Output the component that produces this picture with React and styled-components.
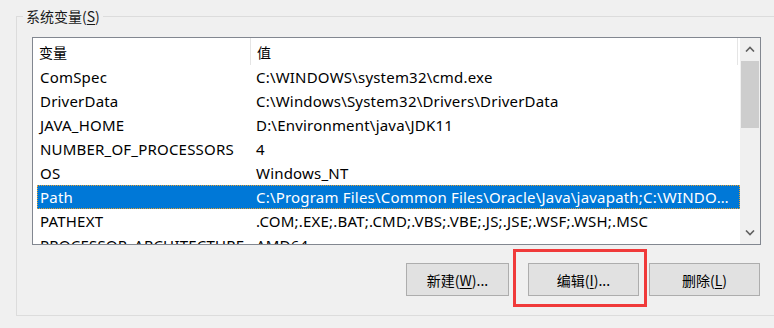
import React from 'react';
import styled, { createGlobalStyle } from 'styled-components';

const GlobalStyle = createGlobalStyle`
  html, body {
    margin: 0;
    padding: 0;
    background: #f0f0f0;
    overflow: hidden;
  }
  body {
    font-family: "Noto Sans", "Noto Sans CJK SC", sans-serif;
    font-size: 15px;
    color: #000;
  }
`;

const Page = styled.div`
  width: 774px;
  height: 328px;
  padding: 16px 0 0 16px;
  box-sizing: border-box;
`;

const GroupBox = styled.fieldset`
  margin: 0;
  padding: 0;
  height: 300px;
  box-sizing: border-box;
  border: 1px solid #dcdcdc;
  border-right: none;
  position: relative;
`;

const Legend = styled.span`
  position: absolute;
  top: -11px;
  left: 6px;
  padding: 0 3px;
  background: #f0f0f0;
  font-family: "Noto Sans CJK SC", sans-serif;
  font-size: 14px;
  line-height: 20px;
  color: #1a1a1a;
`;

const Key = styled.span`
  text-decoration: underline;
  text-underline-offset: 2px;
`;

const Body = styled.div`
  display: flex;
  flex-direction: column;
  padding: 20px 0 0 15px;
`;

const ListView = styled.div`
  width: 729px;
  height: 208px;
  box-sizing: border-box;
  border: 1px solid #828790;
  background: #fff;
  display: flex;
  overflow: hidden;
`;

const Rows = styled.div`
  flex: 1;
  overflow: hidden;
`;

const HeaderRow = styled.div`
  display: flex;
  height: 27px;
  align-items: center;
`;

const HeaderCell = styled.div`
  width: ${p => p.$w}px;
  flex: ${p => (p.$w ? 'none' : '1')};
  height: 100%;
  box-sizing: border-box;
  display: flex;
  align-items: center;
  padding-left: 6px;
  border-right: 1px solid #e5e5e5;
  font-family: "Noto Sans CJK SC", sans-serif;
  font-size: 14px;
`;

const Row = styled.div`
  display: flex;
  height: 24px;
  align-items: center;
  margin-left: 4px;
  box-sizing: border-box;
  white-space: nowrap;
  background: ${p => (p.$selected ? '#0078d7' : 'transparent')};
  color: ${p => (p.$selected ? '#fff' : '#000')};
  outline: ${p => (p.$selected ? '1px dotted #e8a030' : 'none')};
  outline-offset: -1px;
`;

const Cell = styled.div`
  width: ${p => p.$w}px;
  flex: ${p => (p.$w ? 'none' : '1')};
  padding-left: ${p => p.$pad}px;
  box-sizing: border-box;
  overflow: hidden;
  text-overflow: ellipsis;
  white-space: nowrap;
  letter-spacing: 0.2px;
`;

const ScrollBar = styled.div`
  width: 20px;
  background: #f0f0f0;
  display: flex;
  flex-direction: column;
  align-items: stretch;
`;

const ArrowBox = styled.div`
  height: 22px;
  display: flex;
  align-items: center;
  justify-content: center;
`;

const Track = styled.div`
  flex: 1;
  position: relative;
`;

const Thumb = styled.div`
  height: 67px;
  margin: 1px 1px 0 1px;
  background: #cdcdcd;
`;

const ButtonRow = styled.div`
  display: flex;
  justify-content: flex-end;
  margin-top: 18px;
  width: 728px;
`;

const ButtonWrap = styled.div`
  position: relative;
  margin-left: ${p => p.$gap}px;
`;

const Button = styled.button`
  width: ${p => p.$w}px;
  height: 33px;
  box-sizing: border-box;
  background: #e1e1e1;
  border: 1px solid #adadad;
  border-radius: 0;
  padding: 0;
  font-family: "Noto Sans CJK SC", sans-serif;
  font-size: 14px;
  color: #000;
`;

const Highlight = styled.div`
  position: absolute;
  left: -15px;
  top: -14px;
  width: 134px;
  height: 58px;
  box-sizing: border-box;
  border: 3px solid #f03a3a;
  pointer-events: none;
`;

const Chevron = ({ up }) => (
  <svg width="10" height="6" viewBox="0 0 10 6">
    <path
      d={up ? 'M1 5.5 L5 1.5 L9 5.5' : 'M1 0.5 L5 4.5 L9 0.5'}
      fill="none"
      stroke="#606060"
      strokeWidth="1.6"
    />
  </svg>
);

const vars = [
  ['ComSpec', 'C:\\WINDOWS\\system32\\cmd.exe'],
  ['DriverData', 'C:\\Windows\\System32\\Drivers\\DriverData'],
  ['JAVA_HOME', 'D:\\Environment\\java\\JDK11'],
  ['NUMBER_OF_PROCESSORS', '4'],
  ['OS', 'Windows_NT'],
  ['Path', 'C:\\Program Files\\Common Files\\Oracle\\Java\\javapath;C:\\WINDOWS\\system32;C:\\WINDOWS'],
  ['PATHEXT', '.COM;.EXE;.BAT;.CMD;.VBS;.VBE;.JS;.JSE;.WSF;.WSH;.MSC'],
  ['PROCESSOR_ARCHITECTURE', 'AMD64'],
];

export default function App() {
  return (
    <>
      <GlobalStyle />
      <Page>
        <GroupBox>
          <Legend>系统变量(<Key>S</Key>)</Legend>
          <Body>
            <ListView>
              <Rows>
                <HeaderRow>
                  <HeaderCell $w={218}>变量</HeaderCell>
                  <HeaderCell $w={487}>值</HeaderCell>
                </HeaderRow>
                {vars.map(([name, value]) => (
                  <Row key={name} $selected={name === 'Path'}>
                    <Cell $w={214} $pad={3}>{name}</Cell>
                    <Cell $w={484} $pad={5}>{value}</Cell>
                  </Row>
                ))}
              </Rows>
              <ScrollBar>
                <ArrowBox><Chevron up /></ArrowBox>
                <Track><Thumb /></Track>
                <ArrowBox><Chevron /></ArrowBox>
              </ScrollBar>
            </ListView>
            <ButtonRow>
              <ButtonWrap $gap={0}>
                <Button $w={103}>新建(<Key>W</Key>)...</Button>
              </ButtonWrap>
              <ButtonWrap $gap={19}>
                <Button $w={111}>编辑(<Key>I</Key>)...</Button>
                <Highlight />
              </ButtonWrap>
              <ButtonWrap $gap={10}>
                <Button $w={111}>删除(<Key>L</Key>)</Button>
              </ButtonWrap>
            </ButtonRow>
          </Body>
        </GroupBox>
      </Page>
    </>
  );
}
